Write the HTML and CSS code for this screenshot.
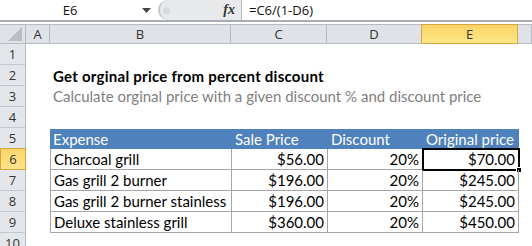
FILE: index.html
```html
<!DOCTYPE html>
<html lang="en">
<head>
    <meta charset="UTF-8">
    <title>Original price from discount</title>
    <link rel="stylesheet" href="styles.css">
</head>
<body>
    <div class="formula-bar">
        <div class="name-box">E6</div>
        <div class="name-arrow">
            <svg width="9" height="5" viewBox="0 0 9 5"><path d="M0 0h9L4.5 5z" fill="#444"/></svg>
        </div>
        <div class="fx-area">
            <span class="knob"><span class="knob-dot"></span></span>
            <span class="fx">fx</span>
        </div>
        <div class="formula">=C6/(1-D6)</div>
    </div>

    <div class="sheet">
        <!-- column headers -->
        <div class="corner"><svg width="14" height="14" viewBox="0 0 14 14"><path d="M14 0v14H0z" fill="#b9bdc4"/></svg></div>
        <div class="col-head">A</div>
        <div class="col-head">B</div>
        <div class="col-head">C</div>
        <div class="col-head">D</div>
        <div class="col-head active">E</div>
        <div class="col-head"></div>

        <!-- row headers -->
        <div class="row-head" style="grid-row: 2">1</div>
        <div class="row-head" style="grid-row: 3">2</div>
        <div class="row-head" style="grid-row: 4">3</div>
        <div class="row-head" style="grid-row: 5">4</div>
        <div class="row-head" style="grid-row: 6">5</div>
        <div class="row-head active" style="grid-row: 7">6</div>
        <div class="row-head" style="grid-row: 8">7</div>
        <div class="row-head" style="grid-row: 9">8</div>
        <div class="row-head" style="grid-row: 10">9</div>
        <div class="row-head" style="grid-row: 11">10</div>

        <div class="title">Get orginal price from percent discount</div>
        <div class="subtitle">Calculate orginal price with a given discount % and discount price</div>

        <div class="data-table">
            <div class="th">Expense</div>
            <div class="th">Sale Price</div>
            <div class="th">Discount</div>
            <div class="th">Original price</div>

            <div class="td first">Charcoal grill</div>
            <div class="td num">$56.00</div>
            <div class="td num">20%</div>
            <div class="td num selected">$70.00<span class="handle"></span></div>

            <div class="td first">Gas grill 2 burner</div>
            <div class="td num">$196.00</div>
            <div class="td num">20%</div>
            <div class="td num">$245.00</div>

            <div class="td first">Gas grill 2 burner stainless</div>
            <div class="td num">$196.00</div>
            <div class="td num">20%</div>
            <div class="td num">$245.00</div>

            <div class="td first">Deluxe stainless grill</div>
            <div class="td num">$360.00</div>
            <div class="td num">20%</div>
            <div class="td num">$450.00</div>
        </div>
    </div>
</body>
</html>
```

FILE: styles.css
```css
* {
    margin: 0;
    padding: 0;
    box-sizing: border-box;
}

body {
    width: 532px;
    height: 246px;
    overflow: hidden;
    background: #fff;
    font-family: 'Open Sans', 'Segoe UI', sans-serif;
    color: #222;
}

/* formula bar */
.formula-bar {
    display: flex;
    height: 22px;
    border-bottom: 2px solid #a9acb2;
    margin-bottom: 2px;
    font-size: 13px;
}

.name-box {
    width: 140px;
    text-align: center;
    line-height: 21px;
    color: #111;
}

.name-arrow {
    width: 18px;
    display: flex;
    align-items: center;
    padding-left: 2px;
}

.fx-area {
    width: 84px;
    display: flex;
    align-items: center;
    background: #e8e9eb;
    border-right: 1px solid #b5b8bd;
    border-radius: 11px 0 0 11px;
}

.knob {
    width: 18px;
    height: 20px;
    border-radius: 10px 0 0 10px;
    border-left: 2px solid #c4c6ca;
    display: flex;
    align-items: center;
    padding-left: 3px;
}

.knob-dot {
    width: 7px;
    height: 7px;
    border-radius: 50%;
    background: #d6d8dc;
}

.fx {
    margin-left: auto;
    margin-right: 6px;
    font-family: 'Liberation Serif', serif;
    font-style: italic;
    font-weight: bold;
    font-size: 14px;
    color: #333;
}

.formula {
    padding-left: 7px;
    line-height: 21px;
    color: #111;
}

/* sheet grid */
.sheet {
    display: grid;
    grid-template-columns: 26px 24px 181px 96px 95px 96px 1fr;
    grid-template-rows: 20px repeat(10, 21px);
    font-family: 'Lato', sans-serif;
}

.corner {
    background: #dfe2e6;
    border: 1px solid #b8bcc2;
    border-left: none;
    display: flex;
    align-items: flex-end;
    justify-content: flex-end;
    padding: 0 3px 2px 0;
}

.col-head {
    background: #dfe2e6;
    border-right: 1px solid #b8bcc2;
    border-top: 1px solid #b8bcc2;
    border-bottom: 1px solid #b8bcc2;
    text-align: center;
    font-family: 'Open Sans', sans-serif;
    font-size: 13px;
    line-height: 18px;
    color: #333;
}

.col-head.active {
    background: linear-gradient(#fbd264, #ffe88a);
    border: 1px solid #d9a53e;
    margin-left: -1px;
}

.row-head {
    grid-column: 1;
    background: #e3e6ea;
    border-right: 1px solid #b8bcc2;
    border-bottom: 1px solid #c3c7cc;
    text-align: center;
    font-family: 'Open Sans', sans-serif;
    font-size: 13px;
    line-height: 21px;
    color: #333;
}

.row-head.active {
    background: linear-gradient(#f9d46c, #ffe48b);
    border: 1px solid #d9a53e;
    margin-top: -1px;
}

.title {
    grid-column: 3 / 8;
    grid-row: 3;
    font-weight: bold;
    font-size: 15px;
    letter-spacing: 0.25px;
    color: #000;
    padding: 2px 0 0 3px;
    white-space: nowrap;
}

.subtitle {
    grid-column: 3 / 8;
    grid-row: 4;
    font-size: 15px;
    color: #808080;
    padding: 1px 0 0 3px;
    white-space: nowrap;
}

/* table */
.data-table {
    grid-column: 3 / 8;
    grid-row: 6 / 11;
    display: grid;
    grid-template-columns: 182px 96px 95px 96px;
    grid-template-rows: repeat(5, 21px);
    align-self: start;
    justify-self: start;
    font-size: 15px;
}

.th {
    background: #4f81bd;
    color: #fff;
    padding: 1px 0 0 3px;
    margin-top: 1px;
    white-space: nowrap;
}

.td {
    border-right: 1px solid #a6a6a6;
    border-bottom: 1px solid #a6a6a6;
    padding: 1px 3px 0 3px;
    white-space: nowrap;
    color: #000;
    position: relative;
}

.td.first {
    border-left: 1px solid #a6a6a6;
}

.td.num {
    text-align: right;
}

.selected {
    outline: 2px solid #000;
    outline-offset: -1px;
}

.handle {
    position: absolute;
    right: -4px;
    bottom: -4px;
    width: 6px;
    height: 6px;
    background: #000;
    border: 1px solid #fff;
}
```
